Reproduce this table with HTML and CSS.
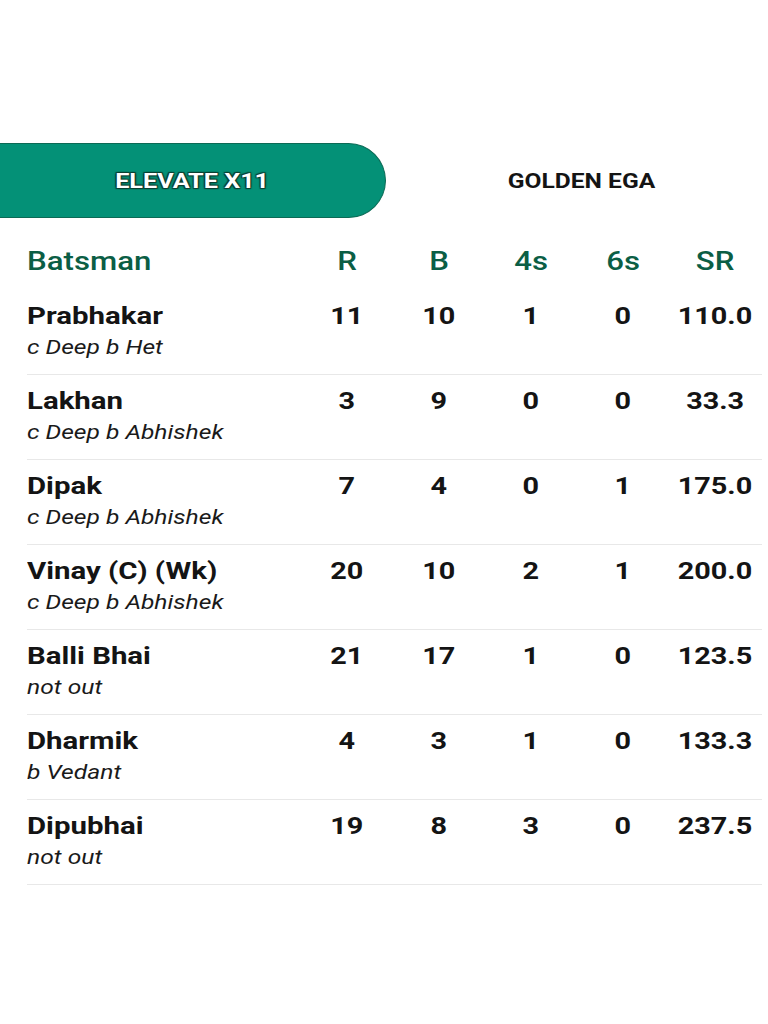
FILE: index.html
```html
<!DOCTYPE html>
<html lang="en">
<head>
<meta charset="utf-8">
<title>Scorecard</title>
<link rel="stylesheet" href="styles.css">
</head>
<body>
<div class="page">
  <div class="tabs">
    <div class="tab active"><span class="w">ELEVATE X11</span></div>
    <div class="tab"><span class="w">GOLDEN EGA</span></div>
  </div>
  <div class="table">
    <div class="row head">
      <div class="name"><span class="w">Batsman</span></div>
      <div class="num"><span class="w">R</span></div>
      <div class="num"><span class="w">B</span></div>
      <div class="num"><span class="w">4s</span></div>
      <div class="num"><span class="w">6s</span></div>
      <div class="num"><span class="w">SR</span></div>
    </div>
    <div class="row">
      <div class="name"><div class="player"><span class="w">Prabhakar</span></div><div class="how"><span class="w">c Deep b Het</span></div></div>
      <div class="num"><span class="w">11</span></div><div class="num"><span class="w">10</span></div><div class="num"><span class="w">1</span></div><div class="num"><span class="w">0</span></div><div class="num"><span class="w">110.0</span></div>
    </div>
    <div class="row">
      <div class="name"><div class="player"><span class="w">Lakhan</span></div><div class="how"><span class="w">c Deep b Abhishek</span></div></div>
      <div class="num"><span class="w">3</span></div><div class="num"><span class="w">9</span></div><div class="num"><span class="w">0</span></div><div class="num"><span class="w">0</span></div><div class="num"><span class="w">33.3</span></div>
    </div>
    <div class="row">
      <div class="name"><div class="player"><span class="w">Dipak</span></div><div class="how"><span class="w">c Deep b Abhishek</span></div></div>
      <div class="num"><span class="w">7</span></div><div class="num"><span class="w">4</span></div><div class="num"><span class="w">0</span></div><div class="num"><span class="w">1</span></div><div class="num"><span class="w">175.0</span></div>
    </div>
    <div class="row">
      <div class="name"><div class="player"><span class="w">Vinay (C) (Wk)</span></div><div class="how"><span class="w">c Deep b Abhishek</span></div></div>
      <div class="num"><span class="w">20</span></div><div class="num"><span class="w">10</span></div><div class="num"><span class="w">2</span></div><div class="num"><span class="w">1</span></div><div class="num"><span class="w">200.0</span></div>
    </div>
    <div class="row">
      <div class="name"><div class="player"><span class="w">Balli Bhai</span></div><div class="how"><span class="w">not out</span></div></div>
      <div class="num"><span class="w">21</span></div><div class="num"><span class="w">17</span></div><div class="num"><span class="w">1</span></div><div class="num"><span class="w">0</span></div><div class="num"><span class="w">123.5</span></div>
    </div>
    <div class="row">
      <div class="name"><div class="player"><span class="w">Dharmik</span></div><div class="how"><span class="w">b Vedant</span></div></div>
      <div class="num"><span class="w">4</span></div><div class="num"><span class="w">3</span></div><div class="num"><span class="w">1</span></div><div class="num"><span class="w">0</span></div><div class="num"><span class="w">133.3</span></div>
    </div>
    <div class="row">
      <div class="name"><div class="player"><span class="w">Dipubhai</span></div><div class="how"><span class="w">not out</span></div></div>
      <div class="num"><span class="w">19</span></div><div class="num"><span class="w">8</span></div><div class="num"><span class="w">3</span></div><div class="num"><span class="w">0</span></div><div class="num"><span class="w">237.5</span></div>
    </div>
  </div>
</div>
</body>
</html>
```
FILE: styles.css
```css
html, body {
  margin: 0;
  padding: 0;
  background: #ffffff;
}
body {
  font-family: Roboto, "Liberation Sans", sans-serif;
  color: #141414;
}
.w {
  display: inline-block;
  white-space: nowrap;
  transform: scaleX(1.2);
  transform-origin: center;
}
.name .w {
  transform-origin: left center;
}
.page {
  padding-top: 143px;
}
.tabs {
  display: flex;
  height: 75px;
}
.tab {
  flex: 1;
  display: flex;
  align-items: center;
  justify-content: center;
  font-size: 20.5px;
  font-weight: 700;
  color: #141414;
  padding-left: 8px;
}
.tab.active {
  flex: 0 0 386px;
  box-sizing: border-box;
  background: #049177;
  border: 1.5px solid #0c6a55;
  border-left: none;
  border-radius: 0 38px 38px 0;
  color: #ffffff;
  font-size: 21px;
  text-shadow: 1px 1px 1px #0b3d30, -1px -1px 1px #0b3d30, 1px -1px 1px #0b3d30, -1px 1px 1px #0b3d30;
  padding-left: 0;
}
.table {
  padding: 0 6px 0 27px;
}
.row {
  display: grid;
  grid-template-columns: 1fr repeat(5, 92px);
  align-items: start;
  padding: 11px 0 13px;
  border-bottom: 1px solid #e8e8e8;
}
.row.head {
  padding: 28px 0 14px;
  border-bottom: none;
  color: #0b5e45;
  font-size: 26px;
  font-weight: 500;
  line-height: 30px;
}
.num {
  text-align: center;
  font-size: 24px;
  font-weight: 700;
  line-height: 30px;
  padding-right: 2px;
}
.row.head .num {
  font-size: 26px;
  font-weight: 500;
}
.player {
  font-size: 24.5px;
  font-weight: 700;
  line-height: 30px;
}
.how {
  font-size: 20.5px;
  font-style: italic;
  line-height: 31px;
  padding-top: 1px;
  color: #1a1a1a;
}
.row:not(.head) {
  padding-bottom: 11px;
}
```
